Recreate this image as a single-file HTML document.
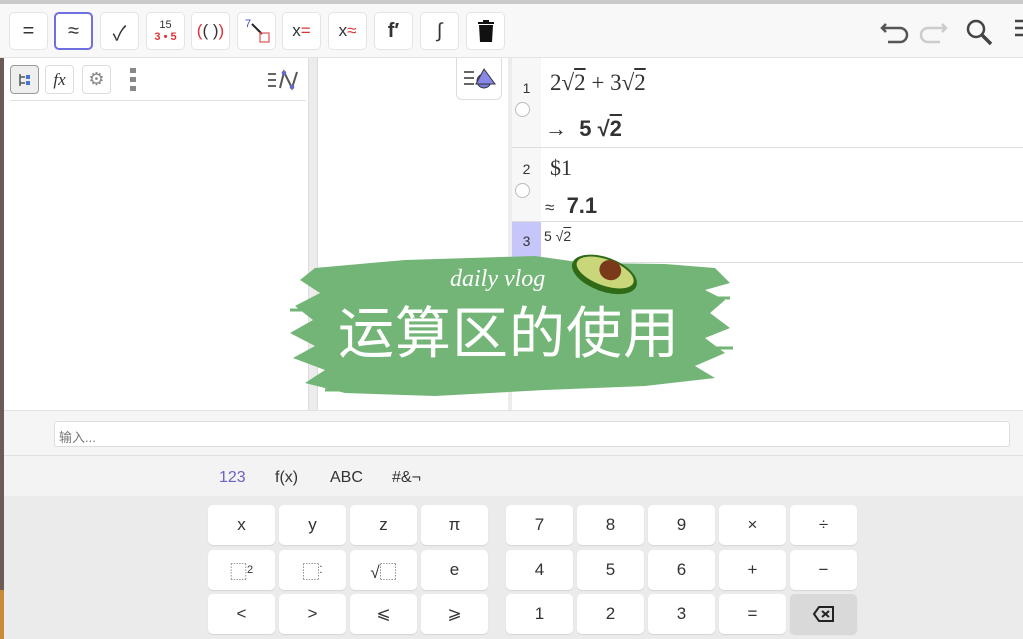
<!DOCTYPE html>
<html><head><meta charset="utf-8"><style>
*{margin:0;padding:0;box-sizing:border-box}
body{width:1023px;height:639px;overflow:hidden;background:#f5f5f5;font-family:"Liberation Sans","Noto Sans CJK SC",sans-serif;position:relative;color:#333}
.a{position:absolute}
.tb{position:absolute;top:12px;width:39px;height:38px;background:#fff;border:1px solid #e4e4e4;border-radius:5px;display:flex;align-items:center;justify-content:center;font-size:20px;color:#333}
.key{position:absolute;width:67px;height:40px;background:#fff;border-radius:5px;box-shadow:0 1px 1px #d4d4d4;display:flex;align-items:center;justify-content:center;font-size:17px;color:#333}
.hb{position:absolute;top:65px;width:29px;height:29px;border:1px solid #ddd;border-radius:4px;background:#fff;display:flex;align-items:center;justify-content:center}
.num{position:absolute;left:512px;width:29px;text-align:center;font-size:14px;color:#333}
.circ{position:absolute;left:515px;width:15px;height:15px;border:1px solid #bbb;border-radius:50%;background:#fff}
</style></head><body>
<div class="a" style="left:0;top:0;width:1023px;height:4px;background:#c9c9c9"></div>
<div class="a" style="left:0;top:4px;width:1023px;height:54px;background:#f8f8f8;border-bottom:1px solid #e2e2e2"></div>
<div class="tb" style="left:9px">=</div>
<div class="tb" style="left:54px;border:2px solid #6f6fe0">≈</div>
<div class="tb" style="left:100px">✓</div>
<div class="tb" style="left:146px;flex-direction:column;font-size:11px;line-height:12px"><span>15</span><span style="color:#d33;font-weight:bold">3 • 5</span></div>
<div class="tb" style="left:191px;color:#d33;font-size:17px">(<span style="color:#333">( )</span>)</div>
<div class="tb" style="left:237px"><svg width="30" height="30"><text x="3" y="11" font-size="11" fill="#44c" font-family="Liberation Sans">7</text><path d="M10 8 L20 18" stroke="#222" stroke-width="2"/><rect x="18" y="17" width="9" height="9" fill="none" stroke="#d55" stroke-width="1.2"/></svg></div>
<div class="tb" style="left:282px;font-size:17px">x<span style="color:#d33">=</span></div>
<div class="tb" style="left:328px;font-size:17px">x<span style="color:#d33">≈</span></div>
<div class="tb" style="left:374px;font-weight:bold">f′</div>
<div class="tb" style="left:420px">∫</div>
<div class="tb" style="left:466px"><svg width="20" height="24"><rect x="2" y="3" width="16" height="2" fill="#111"/><rect x="7" y="1" width="6" height="2" fill="#111"/><path d="M3 6 H17 L16 23 H4 Z" fill="#111"/></svg></div>
<svg class="a" style="left:878px;top:16px" width="145" height="32"><path d="M8 8 L4 12 L8 16 M4 12 H22 a7 7 0 0 1 0 14 H10" fill="none" stroke="#555" stroke-width="2.5"/><path d="M64 8 L68 12 L64 16 M68 12 H50 a7 7 0 0 0 0 14 H62" fill="none" stroke="#ccc" stroke-width="2.5"/><circle cx="98" cy="13" r="8" fill="none" stroke="#444" stroke-width="2.5"/><path d="M104 19 L113 28" stroke="#444" stroke-width="3.5"/><path d="M137 5 H145 M137 12 H145 M137 19 H145" stroke="#444" stroke-width="2.5"/></svg>

<div class="a" style="left:0;top:58px;width:4px;height:581px;background:#6b5a55"></div>
<div class="a" style="left:0;top:590px;width:4px;height:49px;background:#c98a3a"></div>
<div class="a" style="left:4px;top:58px;width:304px;height:352px;background:#fff"></div>
<div class="a" style="left:10px;top:100px;width:296px;height:1px;background:#e0e0e0"></div>
<div class="hb" style="left:10px;background:#eee;border-color:#999"><svg width="16" height="16"><path d="M3 2 V14 M3 5 H8 M3 11 H8" stroke="#555" stroke-width="1.5" fill="none"/><rect x="9" y="3" width="4" height="4" fill="#47c"/><rect x="9" y="9" width="4" height="4" fill="#47c"/></svg></div>
<div class="hb" style="left:45px;font-family:'Liberation Serif',serif;font-style:italic;font-size:17px">fx</div>
<div class="hb" style="left:82px;color:#888;font-size:18px">⚙</div>
<div class="a" style="left:130px;top:68px;width:6px;height:24px;background:repeating-linear-gradient(#888 0 5px,transparent 5px 9px)"></div>
<svg class="a" style="left:266px;top:68px" width="36" height="24"><path d="M2 6 H10 M2 12 H10 M2 18 H10" stroke="#666" stroke-width="2"/><path d="M14 20 L18 4 L26 20 L31 4" fill="none" stroke="#555" stroke-width="2"/><circle cx="18" cy="5" r="2.3" fill="#66c"/><circle cx="26" cy="19" r="2.3" fill="#66c"/></svg>
<div class="a" style="left:308px;top:58px;width:10px;height:352px;background:#ececec;border-left:1px solid #ddd;border-right:1px solid #ddd"></div>
<div class="a" style="left:318px;top:58px;width:190px;height:352px;background:#fff"></div>
<div class="a" style="left:456px;top:58px;width:46px;height:42px;background:#fff;border:1px solid #ddd;border-top:none;border-radius:0 0 6px 6px"></div>
<svg class="a" style="left:462px;top:66px" width="38" height="26"><path d="M2 6 H12 M2 12 H12 M2 18 H12" stroke="#666" stroke-width="2"/><circle cx="22" cy="15" r="7" fill="#7a7ae0" stroke="#333"/><path d="M22 3 L33 18 H14 Z" fill="#8888e8" stroke="#333" stroke-width="1"/></svg>
<div class="a" style="left:508px;top:58px;width:4px;height:352px;background:#ececec"></div>
<div class="a" style="left:512px;top:58px;width:511px;height:352px;background:#fff"></div>
<div class="a" style="left:512px;top:58px;width:29px;height:205px;background:#f7f7f7"></div>
<div class="a" style="left:512px;top:147px;width:511px;height:1px;background:#ddd"></div>
<div class="a" style="left:512px;top:221px;width:511px;height:1px;background:#ddd"></div>
<div class="a" style="left:512px;top:262px;width:511px;height:1px;background:#ddd"></div>
<div class="a" style="left:512px;top:222px;width:29px;height:40px;background:#c6c6fa"></div>
<div class="num" style="top:80px">1</div><div class="circ" style="top:102px"></div>
<div class="num" style="top:161px">2</div><div class="circ" style="top:183px"></div>
<div class="num" style="top:233px">3</div>
<div class="a" style="left:550px;top:70px;font-family:'Liberation Serif',serif;font-size:23px">2√<span style="text-decoration:overline">2</span> + 3√<span style="text-decoration:overline">2</span></div>
<div class="a" style="left:545px;top:116px;font-size:22px;font-weight:bold"><span style="font-weight:normal">→</span>&nbsp; 5 √<span style="text-decoration:overline">2</span></div>
<div class="a" style="left:550px;top:155px;font-family:'Liberation Serif',serif;font-size:22px">$1</div>
<div class="a" style="left:545px;top:193px;font-size:22px;font-weight:bold"><span style="font-weight:normal;font-size:17px">≈</span>&nbsp; 7.1</div>
<div class="a" style="left:544px;top:228px;font-size:14px">5 √<span style="text-decoration:overline">2</span></div>

<svg class="a" style="left:285px;top:238px" width="450" height="170">
<path d="M30 30 L120 22 L250 18 L300 25 L380 26 L430 30 L445 45 L420 52 L440 62 L425 75 L445 90 L420 100 L440 115 L410 128 L430 140 L360 148 L260 152 L150 158 L60 155 L20 145 L40 132 L8 120 L30 108 L5 95 L28 82 L10 68 L35 55 L15 42 Z" fill="#73b577"/>
<path d="M20 40 H70 M5 72 H40 M400 60 H445 M410 110 H448 M15 120 H45 M40 152 H120" stroke="#73b577" stroke-width="3"/>
<text x="165" y="48" font-family="Liberation Serif,serif" font-style="italic" font-size="24" fill="#fff">daily vlog</text>
<g transform="translate(300,8) rotate(20)"><ellipse cx="28" cy="20" rx="34" ry="17" fill="#2f6a17"/><ellipse cx="28" cy="18" rx="30" ry="13" fill="#c9d77a"/><ellipse cx="32" cy="14" rx="11" ry="10" fill="#7a3a1a"/></g>
</svg>
<div class="a" style="left:338px;top:302px;font-size:56px;color:#fff;letter-spacing:1px;line-height:64px">运算区的使用</div>

<div class="a" style="left:4px;top:410px;width:1019px;height:46px;background:#f5f5f5;border-top:1px solid #e0e0e0;border-bottom:1px solid #e0e0e0"></div>
<div class="a" style="left:54px;top:421px;width:956px;height:26px;background:#fff;border:1px solid #ddd;border-radius:3px;font-size:13px;color:#777;padding:5px 4px">输入...</div>
<div class="a" style="left:4px;top:457px;width:1019px;height:182px;background:#f3f3f3"></div>
<div class="a" style="left:4px;top:496px;width:1019px;height:143px;background:#ebebeb"></div>
<div class="a" style="left:219px;top:469px;font-size:16px;color:#6b62c8">123</div>
<div class="a" style="left:275px;top:469px;font-size:16px">f(x)</div>
<div class="a" style="left:330px;top:469px;font-size:16px">ABC</div>
<div class="a" style="left:392px;top:469px;font-size:16px">#&amp;¬</div>

<div class="key" style="left:208px;top:505px">x</div><div class="key" style="left:279px;top:505px">y</div><div class="key" style="left:350px;top:505px">z</div><div class="key" style="left:421px;top:505px">π</div>
<div class="key" style="left:506px;top:505px">7</div><div class="key" style="left:577px;top:505px">8</div><div class="key" style="left:648px;top:505px">9</div><div class="key" style="left:719px;top:505px">×</div><div class="key" style="left:790px;top:505px">÷</div>
<div class="key" style="left:208px;top:550px">⬚<sup style="font-size:11px">2</sup></div><div class="key" style="left:279px;top:550px">⬚<sup style="font-size:10px">⁚</sup></div><div class="key" style="left:350px;top:550px">√⬚</div><div class="key" style="left:421px;top:550px">e</div>
<div class="key" style="left:506px;top:550px">4</div><div class="key" style="left:577px;top:550px">5</div><div class="key" style="left:648px;top:550px">6</div><div class="key" style="left:719px;top:550px">+</div><div class="key" style="left:790px;top:550px">−</div>
<div class="key" style="left:208px;top:594px">&lt;</div><div class="key" style="left:279px;top:594px">&gt;</div><div class="key" style="left:350px;top:594px">⩽</div><div class="key" style="left:421px;top:594px">⩾</div>
<div class="key" style="left:506px;top:594px">1</div><div class="key" style="left:577px;top:594px">2</div><div class="key" style="left:648px;top:594px">3</div><div class="key" style="left:719px;top:594px">=</div>
<div class="key" style="left:790px;top:594px;background:#d9d9d9"><svg width="24" height="18"><path d="M7 2 H21 V16 H7 L2 9 Z" fill="none" stroke="#222" stroke-width="2"/><path d="M10 6 L17 12 M17 6 L10 12" stroke="#222" stroke-width="2"/></svg></div>
</body></html>
